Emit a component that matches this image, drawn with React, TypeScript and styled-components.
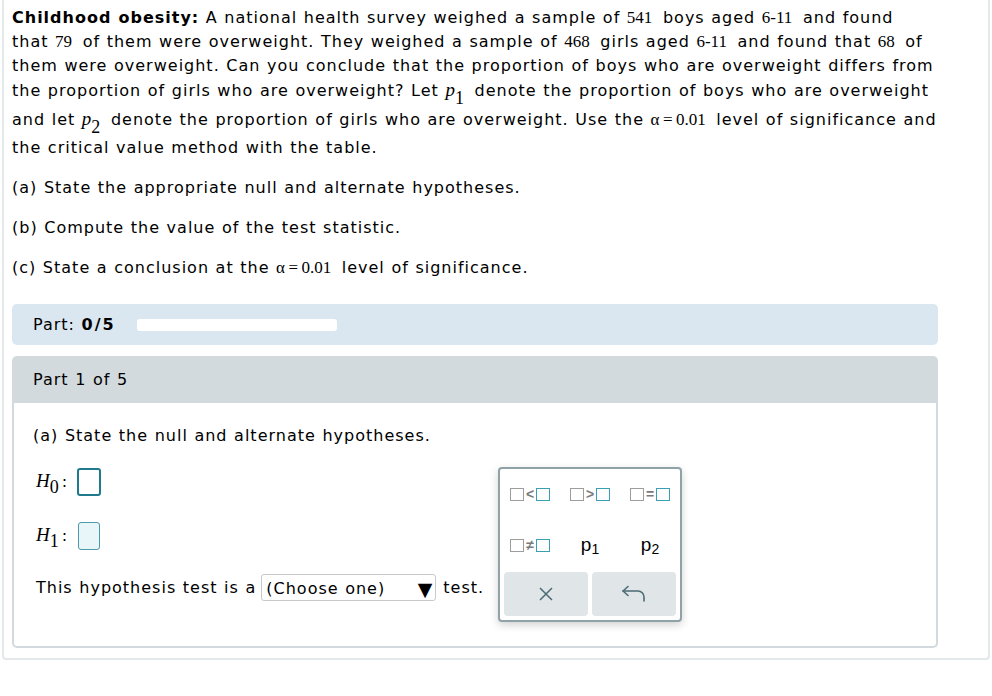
import React from "react";
import styled, { createGlobalStyle } from "styled-components";

// ______________________________________________________
// global

const GlobalStyle = createGlobalStyle`
  body {
    margin: 0;
    background: #fff;
    color: #000;
    font-family: "DejaVu Sans", Verdana, sans-serif;
  }
`;

// ______________________________________________________
// layout

const Page = styled.div`
  margin-left: 2px;
  width: 988px;
  box-sizing: border-box;
  border: 2px solid #e3e8eb;
  border-top: none;
  border-radius: 0 0 4px 4px;
  padding: 6px 50px 10px 8px;
  letter-spacing: 1px;
  word-spacing: 0.5px;
`;

const Question = styled.div`
  font-size: 16px;
  line-height: 24px;
  p {
    margin: 0;
  }
  p + p {
    margin-top: 16px;
  }
`;

const Intro = styled.p`
  margin-bottom: 16px !important;
  & + p {
    margin-top: 0 !important;
  }
`;

const Num = styled.span`
  font-family: "Liberation Serif", "Times New Roman", serif;
  font-size: 17px;
  letter-spacing: 0;
  word-spacing: 0;
  margin-right: 4px;
`;

const MathVar = styled.span`
  font-family: "Liberation Serif", "Times New Roman", serif;
  font-style: italic;
  font-size: 19px;
  letter-spacing: 0;
  margin-right: 4px;
  sub {
    font-style: normal;
    font-size: 18px;
    line-height: 1;
    vertical-align: -8px;
  }
`;

const ProgressBar = styled.div`
  margin-top: 24px;
  height: 41px;
  border-radius: 5px;
  background: #dbe7f0;
  display: flex;
  align-items: center;
  gap: 21px;
  padding-left: 21px;
  font-size: 16px;
  b {
    font-weight: bold;
    letter-spacing: 2px;
  }
`;

const Track = styled.div`
  width: 200px;
  height: 12px;
  border-radius: 3px;
  background: #fff;
`;

const Panel = styled.div`
  margin-top: 11px;
`;

const PanelHeader = styled.div`
  height: 47px;
  background: #d2dadd;
  border-radius: 5px 5px 0 0;
  display: flex;
  align-items: center;
  padding-left: 21px;
  font-size: 16px;
`;

const PanelBody = styled.div`
  position: relative;
  height: 245px;
  box-sizing: border-box;
  border: 2px solid #d2dadd;
  border-top: none;
  border-radius: 0 0 5px 5px;
  padding: 21px 0 0 19px;
  font-size: 16px;
  line-height: 24px;
`;

const Row = styled.div<{ $gap: number }>`
  display: flex;
  align-items: center;
  margin-top: ${(p) => p.$gap}px;
  padding-left: 3px;
`;

const HLabel = styled.span`
  width: 41px;
  font-family: "Liberation Serif", "Times New Roman", serif;
  font-style: italic;
  font-size: 19px;
  letter-spacing: 0;
  sub {
    font-style: normal;
    font-size: 18px;
    line-height: 1;
    vertical-align: -6px;
  }
  i {
    font-family: "DejaVu Sans", Verdana, sans-serif;
    font-style: normal;
    font-size: 16px;
    margin-left: 3px;
  }
`;

const AnswerBox = styled.div<{ $active?: boolean }>`
  box-sizing: border-box;
  height: 28px;
  width: ${(p) => (p.$active ? 24 : 22)}px;
  margin-left: ${(p) => (p.$active ? 0 : 1)}px;
  border-radius: 3px;
  border: ${(p) => (p.$active ? "2px solid #1f7a8b" : "1px solid #4b9aab")};
  background: ${(p) => (p.$active ? "#fff" : "#e8f5f9")};
`;

const Select = styled.div`
  margin: 0 7px 0 5px;
  width: 175px;
  height: 27px;
  box-sizing: border-box;
  border: 1px solid #c9c9c9;
  border-radius: 3px;
  display: flex;
  align-items: center;
  justify-content: space-between;
  padding: 2px 3px 0 4px;
  span {
    font-size: 16px;
  }
  em {
    font-style: normal;
    font-size: 19px;
    letter-spacing: 0;
  }
`;

// ______________________________________________________
// keypad

const Keypad = styled.div`
  position: absolute;
  left: 484px;
  top: 64px;
  width: 184px;
  height: 155px;
  box-sizing: border-box;
  border: 2px solid #8ea2a8;
  border-radius: 4px;
  background: #fff;
  box-shadow: 0 3px 8px rgba(0, 0, 0, 0.18);
  display: flex;
  flex-direction: column;
  letter-spacing: 0;
  word-spacing: 0;
`;

const KeyGrid = styled.div`
  display: grid;
  grid-template-columns: repeat(3, 60px);
  grid-template-rows: 50px 52px;
`;

const Key = styled.div`
  display: flex;
  align-items: center;
  justify-content: center;
`;

const SlotBox = styled.span<{ $teal?: boolean }>`
  display: inline-block;
  width: 14px;
  height: 13px;
  box-sizing: border-box;
  border: 1px solid ${(p) => (p.$teal ? "#3b9fb4" : "#9d9d9d")};
`;

const Op = styled.span`
  display: inline-block;
  width: 12px;
  text-align: center;
  color: #7a7a7a;
  font-family: "Liberation Sans", Arial, sans-serif;
  font-weight: bold;
  font-size: 14px;
  line-height: 13px;
`;

const VarKey = styled.span`
  font-family: "Liberation Sans", Arial, sans-serif;
  font-size: 19px;
  line-height: 1;
  sub {
    font-size: 14px;
    line-height: 1;
    vertical-align: -3px;
  }
`;

const ActionRow = styled.div`
  display: flex;
  gap: 4px;
  padding: 1px 4px 0;
`;

const ActionButton = styled.div`
  width: 84px;
  height: 44px;
  border-radius: 4px;
  background: #e0e6e8;
  display: flex;
  align-items: center;
  justify-content: center;
`;

const Template = ({ op }: { op: string }) => (
  <Key>
    <SlotBox />
    <Op>{op}</Op>
    <SlotBox $teal />
  </Key>
);

const ALPHA = "α\u2009=\u20090.01";

// ______________________________________________________
// component

const App: React.FC = () => (
  <>
    <GlobalStyle />
    <Page>
      <Question>
        <Intro>
          <b>Childhood obesity:</b> A national health survey weighed a sample of <Num>541</Num> boys aged{" "}
          <Num>6-11</Num> and found
          <br />
          that <Num>79</Num> of them were overweight. They weighed a sample of <Num>468</Num> girls aged{" "}
          <Num>6-11</Num> and found that <Num>68</Num> of
          <br />
          them were overweight. Can you conclude that the proportion of boys who are overweight differs from
          <br />
          the proportion of girls who are overweight? Let{" "}
          <MathVar>
            p<sub>1</sub>
          </MathVar>{" "}
          denote the proportion of boys who are overweight
          <br />
          and let{" "}
          <MathVar>
            p<sub>2</sub>
          </MathVar>{" "}
          denote the proportion of girls who are overweight. Use the <Num>{ALPHA}</Num> level of significance and
          <br />
          the critical value method with the table.
        </Intro>
        <p>(a) State the appropriate null and alternate hypotheses.</p>
        <p>(b) Compute the value of the test statistic.</p>
        <p>
          (c) State a conclusion at the <Num>{ALPHA}</Num> level of significance.
        </p>
      </Question>

      <ProgressBar>
        <span>
          Part: <b>0/5</b>
        </span>
        <Track />
      </ProgressBar>

      <Panel>
        <PanelHeader>Part 1 of 5</PanelHeader>
        <PanelBody>
          <div>(a) State the null and alternate hypotheses.</div>
          <Row $gap={20}>
            <HLabel>
              H<sub>0</sub>
              <i>:</i>
            </HLabel>
            <AnswerBox $active />
          </Row>
          <Row $gap={26}>
            <HLabel>
              H<sub>1</sub>
              <i>:</i>
            </HLabel>
            <AnswerBox />
          </Row>
          <Row $gap={24}>
            This hypothesis test is a
            <Select>
              <span>(Choose one)</span>
              <em>▼</em>
            </Select>
            test.
          </Row>

          <Keypad>
            <KeyGrid>
              <Template op="<" />
              <Template op=">" />
              <Template op="=" />
              <Template op="≠" />
              <Key>
                <VarKey>
                  p<sub>1</sub>
                </VarKey>
              </Key>
              <Key>
                <VarKey>
                  p<sub>2</sub>
                </VarKey>
              </Key>
            </KeyGrid>
            <ActionRow>
              <ActionButton>
                <svg width="16" height="16" viewBox="0 0 16 16" fill="none" stroke="#4b6a74" strokeWidth="1.5">
                  <path d="M2 2 L14 14 M14 2 L2 14" />
                </svg>
              </ActionButton>
              <ActionButton>
                <svg width="26" height="18" viewBox="0 0 26 18" fill="none" stroke="#4b6a74" strokeWidth="1.6" strokeLinecap="round" strokeLinejoin="round">
                  <path d="M7 1.5 L2 6 L7 10.5" />
                  <path d="M2 6 H17 a6 6 0 0 1 6 6 V16" />
                </svg>
              </ActionButton>
            </ActionRow>
          </Keypad>
        </PanelBody>
      </Panel>
    </Page>
  </>
);

export default App;
